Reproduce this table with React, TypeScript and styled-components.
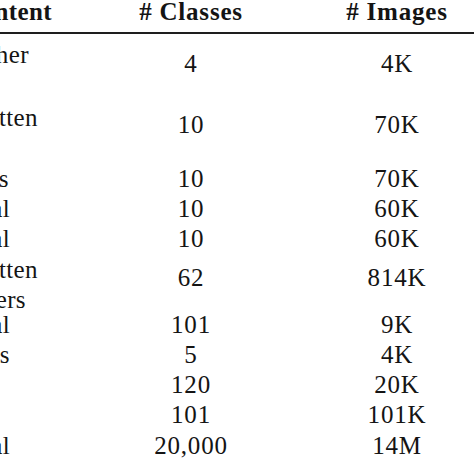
import React from 'react';
import styled, { createGlobalStyle } from 'styled-components';

const GlobalStyle = createGlobalStyle`
  html, body {
    margin: 0;
    padding: 0;
    background: #ffffff;
    overflow: hidden;
  }
  body {
    font-family: "Liberation Serif", "Times New Roman", serif;
    color: #141414;
  }
`;

interface Line {
  text: string;
  end: number;
}

interface DatasetRow {
  content: Line[];
  classes: string;
  images: string;
  height: number;
  shift: number;
}

const rows: DatasetRow[] = [
  { content: [{ text: 'Weather', end: 29 }], classes: '4', images: '4K', height: 63, shift: 9 },
  { content: [{ text: 'Handwritten', end: 38 }], classes: '10', images: '70K', height: 61, shift: 7 },
  { content: [{ text: 'Clothes', end: 9 }], classes: '10', images: '70K', height: 30, shift: 0 },
  { content: [{ text: 'Natural', end: 10 }], classes: '10', images: '60K', height: 30, shift: 0 },
  { content: [{ text: 'Natural', end: 10 }], classes: '10', images: '60K', height: 31, shift: 0 },
  {
    content: [
      { text: 'Handwritten', end: 38 },
      { text: 'characters', end: 26 },
    ],
    classes: '62',
    images: '814K',
    height: 55,
    shift: 8,
  },
  { content: [{ text: 'Natural', end: 10 }], classes: '101', images: '9K', height: 30, shift: 0 },
  { content: [{ text: 'Flowers', end: 10 }], classes: '5', images: '4K', height: 30, shift: 0 },
  { content: [], classes: '120', images: '20K', height: 30, shift: 0 },
  { content: [], classes: '101', images: '101K', height: 31, shift: 0 },
  { content: [{ text: 'Natural', end: 10 }], classes: '20,000', images: '14M', height: 31, shift: 0 },
];

const Table = styled.div`
  width: 474px;
  display: flex;
  flex-direction: column;
`;

const HeaderRow = styled.div`
  display: grid;
  grid-template-columns: 62px 258px 154px;
  padding-bottom: 8px;
  border-bottom: 2px solid #1e1e1e;
  font-weight: bold;
  font-size: 25px;
  line-height: 24px;
  letter-spacing: 0.6px;
`;

const Body = styled.div`
  padding-top: 6px;
  display: flex;
  flex-direction: column;
`;

const Row = styled.div<{ $height: number }>`
  display: grid;
  grid-template-columns: 62px 258px 154px;
  align-items: start;
  height: ${(p) => p.$height}px;
  font-size: 25px;
  line-height: 30px;
`;

const ContentCell = styled.div`
  overflow: hidden;
  display: flex;
  flex-direction: column;
`;

const ContentLine = styled.div<{ $end: number }>`
  width: ${(p) => p.$end}px;
  display: flex;
  justify-content: flex-end;
  white-space: nowrap;
  letter-spacing: 0.4px;
`;

const NumberCell = styled.div<{ $shift?: number }>`
  text-align: center;
  white-space: nowrap;
  letter-spacing: 0.8px;
  padding-top: ${(p) => p.$shift ?? 0}px;
`;

const App: React.FC = () => {
  return (
    <>
      <GlobalStyle />
      <Table>
        <HeaderRow>
          <ContentCell>
            <ContentLine $end={52}>
              <span>Content</span>
            </ContentLine>
          </ContentCell>
          <NumberCell># Classes</NumberCell>
          <NumberCell># Images</NumberCell>
        </HeaderRow>
        <Body>
          {rows.map((row, i) => (
            <Row key={i} $height={row.height}>
              <ContentCell>
                {row.content.map((line, j) => (
                  <ContentLine key={j} $end={line.end}>
                    <span>{line.text}</span>
                  </ContentLine>
                ))}
              </ContentCell>
              <NumberCell $shift={row.shift}>{row.classes}</NumberCell>
              <NumberCell $shift={row.shift}>{row.images}</NumberCell>
            </Row>
          ))}
        </Body>
      </Table>
    </>
  );
};

export default App;
